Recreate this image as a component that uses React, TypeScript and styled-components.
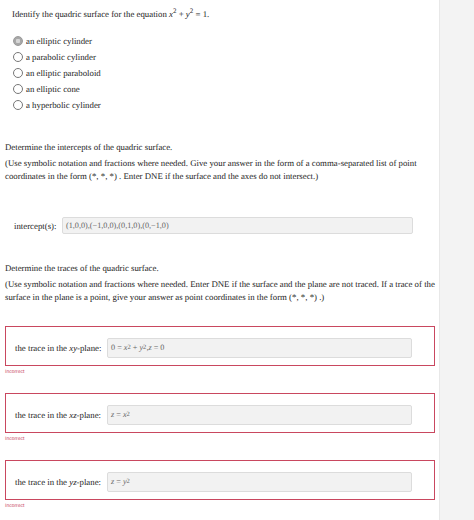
import { createGlobalStyle } from 'styled-components'
import styled from 'styled-components'

const GlobalStyle = createGlobalStyle`
  html, body {
    margin: 0;
    padding: 0;
    background: #ffffff;
  }
  body {
    font-family: "Liberation Serif", "Times New Roman", serif;
    color: #1e1e1e;
    text-rendering: geometricPrecision;
  }
`

const options = [
  'an elliptic cylinder',
  'a parabolic cylinder',
  'an elliptic paraboloid',
  'an elliptic cone',
  'a hyperbolic cylinder'
]

const Page = styled.div`
  display: flex;
  width: 474px;
  height: 520px;
  overflow: hidden;
`

const Main = styled.div`
  width: 439px;
  flex-shrink: 0;
  padding: 0 4px 0 5px;
  box-sizing: border-box;
`

const Sidebar = styled.div`
  flex: 1;
  background: #f3f3f3;
  border-left: 1px solid #e8e8e8;
`

const Prompt = styled.p<{ $indent?: number; $top?: number }>`
  margin: ${({ $top }) => $top ?? 0}px 0 0 ${({ $indent }) => $indent ?? 0}px;
  font-size: 8.8px;
  line-height: 13px;
`

const RadioList = styled.div`
  display: flex;
  flex-direction: column;
  margin: 12px 0 0 8px;
`

const RadioRow = styled.label`
  display: flex;
  align-items: center;
  gap: 3px;
  height: 16px;
  font-size: 8.8px;
`

const RadioDot = styled.span<{ $checked: boolean }>`
  width: 10px;
  height: 10px;
  border-radius: 50%;
  box-sizing: border-box;
  border: 1px solid ${({ $checked }) => ($checked ? '#9a9a9a' : '#777')};
  background: ${({ $checked }) => ($checked ? 'radial-gradient(circle, #d6d6d6 0 2px, #a8a8a8 2.5px)' : '#fff')};
  flex-shrink: 0;
`

const AnswerRow = styled.div`
  display: flex;
  align-items: center;
  gap: 8px;
  margin: 34px 22px 0 9px;
`

const Label = styled.span<{ $width: number }>`
  flex: 0 0 ${({ $width }) => $width}px;
  min-width: 0;
  font-size: 8.8px;
  white-space: nowrap;
`

const Field = styled.div<{ $height: number }>`
  flex: 1;
  height: ${({ $height }) => $height}px;
  box-sizing: border-box;
  background: #f2f2f2;
  border: 1px solid #dcdcdc;
  border-radius: 2px;
  display: flex;
  align-items: center;
  padding: 0 3px;
  font-size: 8.2px;
  color: #666;
  white-space: pre;
`

const TraceBlock = styled.div<{ $top: number }>`
  margin-top: ${({ $top }) => $top}px;
`

const TraceBox = styled.div`
  display: flex;
  align-items: center;
  gap: 8px;
  height: 40px;
  box-sizing: border-box;
  border: 1px solid #c9475f;
  padding: 3px 22px 0 9px;
  width: 430px;
`

const Incorrect = styled.div`
  font-family: "Liberation Sans", Arial, sans-serif;
  font-size: 5px;
  line-height: 7px;
  color: #c9475f;
  margin-top: 3px;
`

const I = styled.i`
  font-style: italic;
`

const Sup = styled.sup`
  font-size: 80%;
  line-height: 0;
  vertical-align: 0.5em;
`

const traces = [
  { plane: <I>xy</I>, value: <>0 = <I>x</I><Sup>2</Sup> + <I>y</I><Sup>2</Sup>,<I>z</I> = 0</>, top: 22 },
  { plane: <I>xz</I>, value: <><I>z</I> = <I>x</I><Sup>2</Sup></>, top: 17 },
  { plane: <I>yz</I>, value: <><I>z</I> = <I>y</I><Sup>2</Sup></>, top: 17 }
]

export default function App() {
  return (
    <>
      <GlobalStyle />
      <Page>
        <Main>
          <Prompt $indent={7} $top={8}>
            Identify the quadric surface for the equation <I>x</I><Sup>2</Sup> + <I>y</I><Sup>2</Sup> = 1.
          </Prompt>
          <RadioList>
            {options.map((o, i) => (
              <RadioRow key={o}>
                <RadioDot $checked={i === 0} />
                {o}
              </RadioRow>
            ))}
          </RadioList>

          <Prompt $top={28}>Determine the intercepts of the quadric surface.</Prompt>
          <Prompt $top={3}>
            (Use symbolic notation and fractions where needed. Give your answer in the form of a comma-separated list of point
            coordinates in the form (*, *, *) . Enter DNE if the surface and the axes do not intersect.)
          </Prompt>
          <AnswerRow>
            <Label $width={40}>intercept(s):</Label>
            <Field $height={17}>(1,0,0),(−1,0,0),(0,1,0),(0,−1,0)</Field>
          </AnswerRow>

          <Prompt $top={28}>Determine the traces of the quadric surface.</Prompt>
          <Prompt $top={3}>
            (Use symbolic notation and fractions where needed. Enter DNE if the surface and the plane are not traced. If a trace of the
            surface in the plane is a point, give your answer as point coordinates in the form (*, *, *) .)
          </Prompt>

          {traces.map((t, i) => (
            <TraceBlock key={i} $top={t.top}>
              <TraceBox>
                <Label $width={84}>the trace in the {t.plane}-plane:</Label>
                <Field $height={20}>{t.value}</Field>
              </TraceBox>
              <Incorrect>Incorrect</Incorrect>
            </TraceBlock>
          ))}
        </Main>
        <Sidebar />
      </Page>
    </>
  )
}
